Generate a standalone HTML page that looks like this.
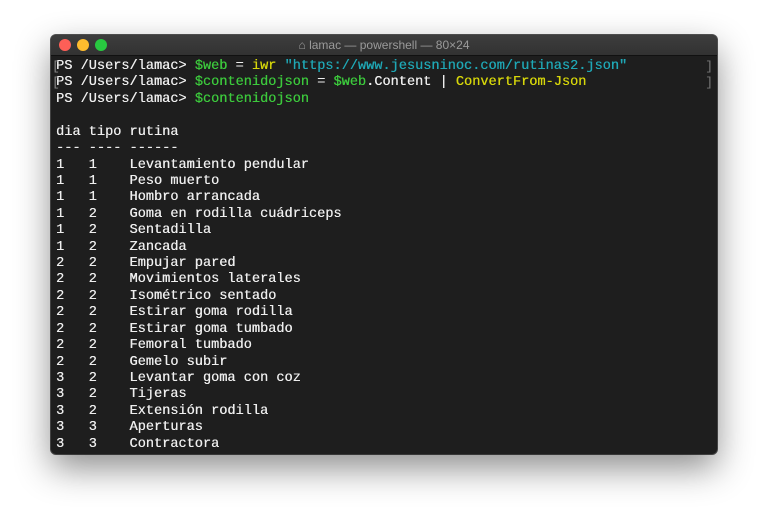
<!DOCTYPE html>
<html><head><meta charset="utf-8"><style>
html,body{margin:0;padding:0;background:#fff;width:768px;height:522px;overflow:hidden}
.win{position:absolute;left:51px;top:35px;width:666px;height:419px;background:#1e1e1e;border-radius:5px;box-shadow:0 14px 35px rgba(0,0,0,.45),0 0 0 1px #555;overflow:hidden}
.tb{height:20px;background:linear-gradient(#3d3d3d,#323232);border-bottom:1px solid #111;position:relative;font:12px "Liberation Sans",sans-serif;color:#9a9a9a;text-align:center;line-height:20px}
.d{position:absolute;top:4px;width:12px;height:12px;border-radius:50%}
pre{margin:0;position:absolute;left:5px;top:24px;font:13.6px/16.42px "Liberation Mono",monospace;color:#eee;white-space:pre;text-shadow:0.3px 0 0 currentColor}
.g{color:#3cc83c}.y{color:#d6d60a}.c{color:#1fa7b5}
</style></head><body>
<div class="win">
<div class="tb"><span class="d" style="left:8px;background:#fe5f57"></span><span class="d" style="left:26px;background:#febc2e"></span><span class="d" style="left:44px;background:#28c840"></span>&#8962; lamac — powershell — 80×24</div>
<pre>PS /Users/lamac&gt; <span class="g">$web</span> = <span class="y">iwr</span> <span class="c">"https://www.jesusninoc.com/rutinas2.json"</span>
PS /Users/lamac&gt; <span class="g">$contenidojson</span> = <span class="g">$web</span>.Content | <span class="y">ConvertFrom-Json</span>
PS /Users/lamac&gt; <span class="g">$contenidojson</span>

dia tipo rutina
--- ---- ------
1   1    Levantamiento pendular
1   1    Peso muerto
1   1    Hombro arrancada
1   2    Goma en rodilla cuádriceps
1   2    Sentadilla
1   2    Zancada
2   2    Empujar pared
2   2    Movimientos laterales
2   2    Isométrico sentado
2   2    Estirar goma rodilla
2   2    Estirar goma tumbado
2   2    Femoral tumbado
2   2    Gemelo subir
3   2    Levantar goma con coz
3   2    Tijeras
3   2    Extensión rodilla
3   3    Aperturas
3   3    Contractora</pre>
<div style="position:absolute;left:1px;top:24px;font:13px/16.42px 'Liberation Mono',monospace;color:#888">[<br>[</div>
<div style="position:absolute;right:4px;top:24px;font:13px/16.42px 'Liberation Mono',monospace;color:#777">]<br>]</div>
</div>
</body></html>
